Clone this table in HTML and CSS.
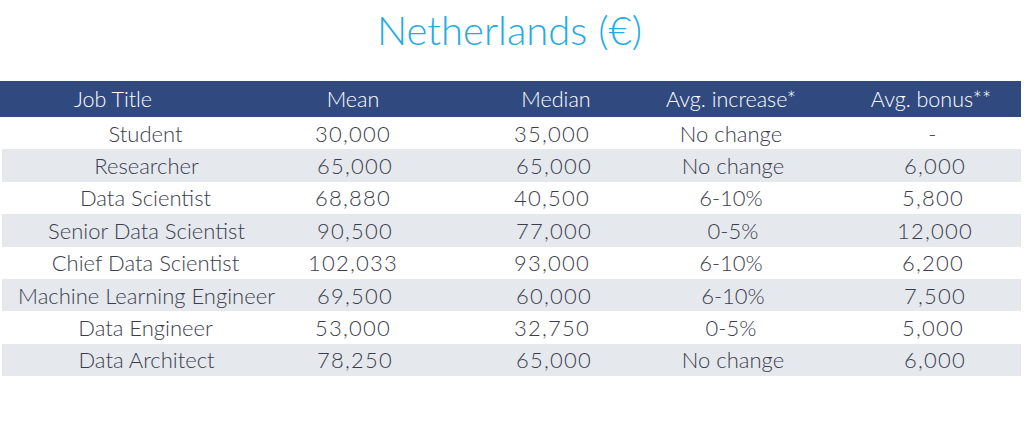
FILE: index.html
```
<!DOCTYPE html>
<html>
<head>
<meta charset="utf-8">
<link rel="stylesheet" href="styles.css">
</head>
<body>
<h1 class="title">Netherlands (€)</h1>
<div class="table">
  <div class="row head">
    <div class="c1">Job Title</div><div class="c2">Mean</div><div class="c3">Median</div><div class="c4">Avg. increase*</div><div class="c5">Avg. bonus**</div>
  </div>
  <div class="row"><div class="c1">Student</div><div class="c2">30,000</div><div class="c3">35,000</div><div class="c4">No change</div><div class="c5">-</div></div>
  <div class="row alt"><div class="c1">Researcher</div><div class="c2">65,000</div><div class="c3">65,000</div><div class="c4">No change</div><div class="c5">6,000</div></div>
  <div class="row"><div class="c1">Data Scientist</div><div class="c2">68,880</div><div class="c3">40,500</div><div class="c4">6-10%</div><div class="c5">5,800</div></div>
  <div class="row alt"><div class="c1">Senior Data Scientist</div><div class="c2">90,500</div><div class="c3">77,000</div><div class="c4">0-5%</div><div class="c5">12,000</div></div>
  <div class="row"><div class="c1">Chief Data Scientist</div><div class="c2">102,033</div><div class="c3">93,000</div><div class="c4">6-10%</div><div class="c5">6,200</div></div>
  <div class="row alt"><div class="c1">Machine Learning Engineer</div><div class="c2">69,500</div><div class="c3">60,000</div><div class="c4">6-10%</div><div class="c5">7,500</div></div>
  <div class="row"><div class="c1">Data Engineer</div><div class="c2">53,000</div><div class="c3">32,750</div><div class="c4">0-5%</div><div class="c5">5,000</div></div>
  <div class="row alt"><div class="c1">Data Architect</div><div class="c2">78,250</div><div class="c3">65,000</div><div class="c4">No change</div><div class="c5">6,000</div></div>
</div>
</body>
</html>
```
FILE: styles.css
```
html, body {
  margin: 0;
  padding: 0;
  background: #ffffff;
}
body {
  width: 1035px;
  height: 438px;
  font-family: "Lato", "Liberation Sans", sans-serif;
  font-weight: 300;
  color: #3b3d4d;
  overflow: hidden;
}
.title {
  margin: 0;
  height: 81px;
  padding-top: 6px;
  padding-right: 16px;
  box-sizing: border-box;
  text-align: center;
  font-weight: 300;
  font-size: 40px;
  line-height: 48px;
  color: #22ace4;
}
.table {
  width: 1021px;
}
.row {
  display: grid;
  grid-template-columns: 267px 172px 226px 132px 224px;
  height: 32.4px;
  align-items: center;
  font-size: 22px;
  white-space: nowrap;
}
.row > div {
  display: flex;
  justify-content: center;
  min-width: 0;
}
.row.alt {
  background: #e5e9ee;
  margin-left: 2px;
}
.row.alt .c1 { margin-left: -2px; }
.head {
  height: 36px;
  background: #304a7f;
  color: #ffffff;
  font-size: 21.5px;
}
.c1 { padding-left: 24px; }
.c2, .c3, .c5 { letter-spacing: 1.2px; }
.c5 { padding-left: 48px; }
.head > div { letter-spacing: 0; }
.head .c1 { padding-left: 0; padding-right: 41px; }
.head .c3 { padding-left: 8px; }
.head .c5 { padding-left: 44px; }
```
